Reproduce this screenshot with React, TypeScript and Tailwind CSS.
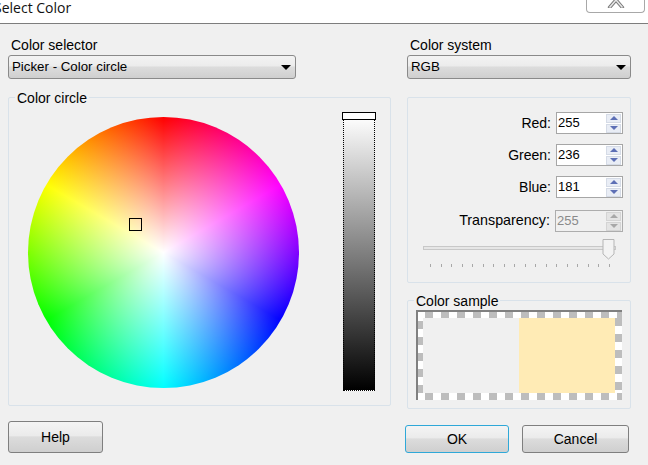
import React from 'react';

const ROWS = [
  { label: 'Red', value: '255' },
  { label: 'Green', value: '236' },
  { label: 'Blue', value: '181' },
];

const Combo = ({ text }: { text: string }) => (
  <div className="h-[24px] rounded-[3px] border border-[#8a8a8a] bg-[linear-gradient(#f3f3f3_0%,#ececec_45%,#dcdcdc_50%,#cfcfcf_100%)] flex items-center justify-between pl-[3px] pr-[4px] text-[13.3px] text-black">
    <span>{text}</span>
    <span className="w-0 h-0 border-x-[5px] border-x-transparent border-t-[5px] border-t-black" />
  </div>
);

const Btn = ({ text, className }: { text: string; className: string }) => (
  <div className={`rounded-[3px] border bg-[linear-gradient(#f4f4f4_0%,#ebebeb_45%,#dcdcdc_50%,#cfcfcf_100%)] flex items-center justify-center text-[14px] text-black ${className}`}>
    {text}
  </div>
);

const Spin = ({ value, disabled }: { value: string; disabled?: boolean }) => (
  <div className={`h-[22px] border flex items-center justify-between ${disabled ? 'w-[68px] border-[#adadad] text-[#8a8a8a]' : 'w-[67px] border-[#a6a6a6] bg-white text-black'} pl-[1px] pr-[1px] text-[13px]`}>
    <span>{value}</span>
    <div className="flex flex-col gap-[1px]">
      <div className={`w-[15px] h-[9px] flex items-center justify-center border ${disabled ? 'border-[#d4d4d4] bg-[#e4e4e4]' : 'border-[#d5dbe6] bg-[#e9edf5]'}`}>
        <span className={`w-0 h-0 border-x-[4px] border-x-transparent border-b-[4px] ${disabled ? 'border-b-[#a8a8a8]' : 'border-b-[#5d6fb5]'}`} />
      </div>
      <div className={`w-[15px] h-[9px] flex items-center justify-center border ${disabled ? 'border-[#d4d4d4] bg-[#e4e4e4]' : 'border-[#d5dbe6] bg-[#e9edf5]'}`}>
        <span className={`w-0 h-0 border-x-[4px] border-x-transparent border-t-[4px] ${disabled ? 'border-t-[#a8a8a8]' : 'border-t-[#5d6fb5]'}`} />
      </div>
    </div>
  </div>
);

export default function App() {
  return (
    <div className="w-[648px] h-[465px] overflow-hidden bg-[#f0f0f0] font-['Liberation_Sans',Arial,sans-serif] flex flex-col">
      {/* title bar */}
      <div className="h-[24px] shrink-0 bg-white border-b border-[#7d7d7d] flex justify-between pr-[3px]">
        <span className="-ml-[6px] -mt-[2px] text-[14px] leading-[20px] text-[#111] font-['Open_Sans',sans-serif]">Select Color</span>
        <div className="w-[59px] h-[13px] rounded-b-[4px] border border-t-0 border-[#a8a8a8] bg-white flex justify-center">
          <svg width="18" height="8" viewBox="0 0 18 8" fill="none" strokeLinecap="square">
            <path d="M9 0 L3 7 M9 0 L15 7" stroke="#7a7a7a" strokeWidth="3.5" />
            <path d="M9 0 L3 7 M9 0 L15 7" stroke="#e6e6e6" strokeWidth="1.5" />
          </svg>
        </div>
      </div>

      <div className="flex pl-[8px]">
        {/* left */}
        <div className="w-[383px] pt-[13px]">
          <div className="pl-[3px] text-[14px] leading-[16px] text-black mb-[2px]">Color selector</div>
          <div className="w-[288px]"><Combo text="Picker - Color circle" /></div>
          <div className="relative mt-[18px] h-[309px] rounded-[2px] border border-[#d9e2ea] flex pl-[19px] pt-[19px]">
            <span className="absolute -top-[8px] left-[6px] px-[2px] bg-[#f0f0f0] text-[14px] leading-[16px] text-black">Color circle</span>
            <div className="relative w-[271px] h-[271px] rounded-full bg-[conic-gradient(#ff0000,#ff00ff,#0000ff,#00ffff,#00ff00,#ffff00,#ff0000)]">
              <div className="absolute inset-0 rounded-full bg-[radial-gradient(circle_closest-side,#ffffff_0%,rgba(255,255,255,0)_100%)]" />
              <div className="absolute left-[101px] top-[101px] w-[13px] h-[13px] border border-black" />
            </div>
            <div className="relative ml-[44px] -mt-[1px] w-[32px] h-[275px]">
              <div className="absolute -left-[1px] -top-[4px] w-[34px] h-[8px] bg-white border border-black z-10" />
              <div className="h-full border-x border-b border-dotted border-black bg-[linear-gradient(#ffffff,#000000)]" />
            </div>
          </div>
          <Btn text="Help" className="mt-[15px] w-[95px] h-[32px] border-[#7f7f7f]" />
        </div>

        {/* right */}
        <div className="ml-[16px] w-[224px] pt-[13px]">
          <div className="pl-[3px] text-[14px] leading-[16px] text-black mb-[2px]">Color system</div>
          <Combo text="RGB" />
          <div className="mt-[18px] h-[186px] rounded-[2px] border border-[#d9e2ea] pt-[14px] pr-[7px]">
            <div className="flex flex-col gap-[10px]">
              {ROWS.map(r => (
                <div key={r.label} className="flex items-center justify-end gap-[5px] text-[14px] text-black">
                  <span>{r.label}:</span>
                  <Spin value={r.value} />
                </div>
              ))}
              <div className="mt-[2px] flex items-center justify-end gap-[5px] text-[14.3px] text-black">
                <span>Transparency:</span>
                <Spin value="255" disabled />
              </div>
            </div>
            <div className="relative ml-[15px] mt-[14px] w-[193px] h-[4px] border border-[#c8c8c8] bg-[#e6e6e6]">
              <svg className="absolute right-0 -top-[9px]" width="13" height="22" viewBox="0 0 13 22">
                <path d="M1 1.5 L12 1.5 L12 16 L6.5 21 L1 16 Z" fill="#f3f3f3" stroke="#b5b5b5" />
              </svg>
            </div>
            <div className="ml-[22px] mt-[14px] w-[180px] flex justify-between">
              {Array.from({ length: 18 }).map((_, i) => (
                <span key={i} className="w-[1px] h-[3px] bg-[#a8a8a8]" />
              ))}
            </div>
          </div>

          <div className="relative mt-[17px] h-[109px] rounded-[2px] border border-[#d9e2ea] pt-[9px] pl-[8px]">
            <span className="absolute -top-[8px] left-[6px] px-[2px] bg-[#f0f0f0] text-[14px] leading-[16px] text-black">Color sample</span>
            <div className="w-[206px] h-[90px] border-t-2 border-l-2 border-[#808080] bg-white flex flex-col">
              <div className="h-[6px] bg-[repeating-linear-gradient(90deg,#ffffff_0_7px,#bdbdbd_7px_15px,#ffffff_15px_16px)]" />
              <div className="flex-1 flex">
                <div className="w-[5px] bg-[repeating-linear-gradient(180deg,#ffffff_0_3px,#bdbdbd_3px_11px,#ffffff_11px_16px)]" />
                <div className="flex-1 bg-[#f0f0f0]" />
                <div className="flex-1 bg-[#ffebb5]" />
                <div className="w-[7px] bg-[repeating-linear-gradient(180deg,#bdbdbd_0_8px,#ffffff_8px_16px)]" />
              </div>
              <div className="h-[7px] bg-[repeating-linear-gradient(90deg,#ffffff_0_7px,#bdbdbd_7px_15px,#ffffff_15px_16px)]" />
            </div>
          </div>

          <div className="flex mt-[16px] -ml-[2px] gap-[13px]">
            <Btn text="OK" className="w-[104px] h-[28px] border-[#2fa8d8]" />
            <Btn text="Cancel" className="w-[107px] h-[28px] border-[#7f7f7f]" />
          </div>
        </div>
      </div>
    </div>
  );
}
